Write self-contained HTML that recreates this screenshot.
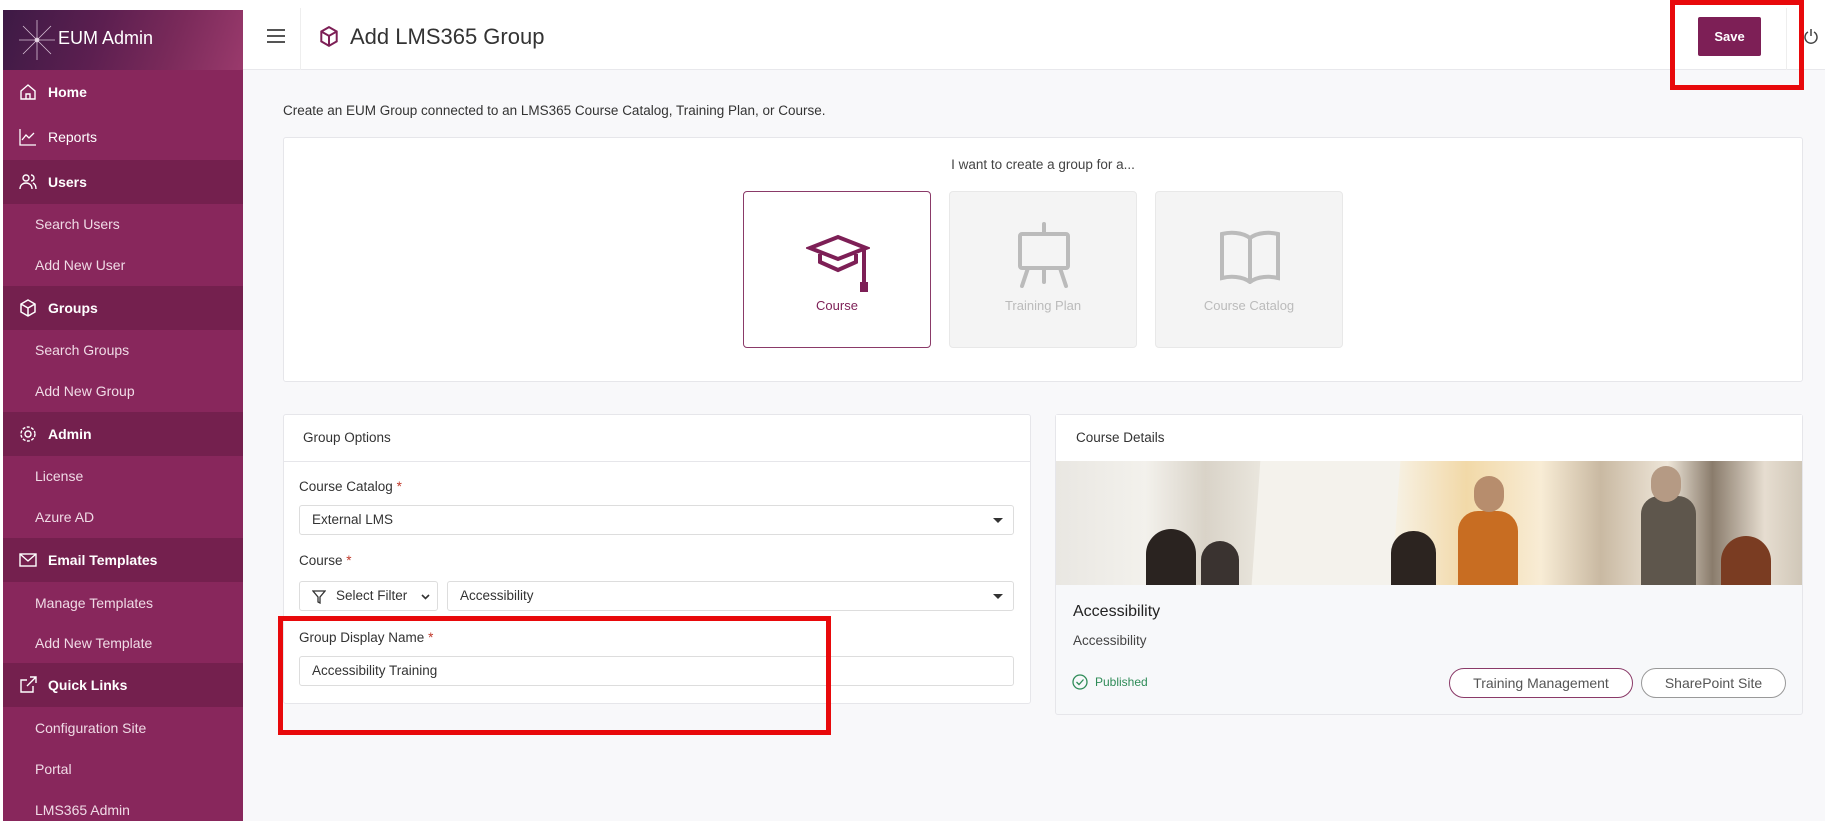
<!DOCTYPE html>
<html><head><meta charset="utf-8"><style>
*{box-sizing:border-box;margin:0;padding:0}
body{width:1825px;height:821px;overflow:hidden;background:#fff;font-family:"Liberation Sans",sans-serif;position:relative;color:#333}
.abs{position:absolute}
#side{left:3px;top:10px;width:240px;height:811px;background:#88275c;overflow:hidden}
#logo{left:0;top:0;width:240px;height:60px;background:linear-gradient(110deg,#3d1a45 0%,#5c1f50 40%,#7a2a5a 70%,#9a3a6c 100%)}
.mi{position:absolute;left:0;width:240px;height:44px;color:#fff;font-size:14px;display:flex;align-items:center}
.mi.top{background:#74204e;font-weight:bold;padding-left:45px}
.mi.plain{font-weight:bold;padding-left:45px}
.mi.sub{padding-left:32px;color:#f0dbe6}
.mi svg{position:absolute;left:16px;top:13px}
#main{left:243px;top:70px;width:1582px;height:751px;background:#f8f8fa}
.card{background:#fff;border:1px solid #e6e6ea;border-radius:3px}
.tile{position:absolute;top:191px;width:188px;height:157px;border-radius:4px;font-size:13px;text-align:center}
.lbl{font-size:13.5px;color:#333}
.req{color:#c0392b}
.sel{position:absolute;height:30px;border:1px solid #ddd;border-radius:3px;background:#fff;font-size:13.5px;padding-left:12px;line-height:28px}
.caret{position:absolute;right:10px;top:12px;width:0;height:0;border-left:5px solid transparent;border-right:5px solid transparent;border-top:5px solid #333}
.pill{position:absolute;top:668px;height:30px;border-radius:15px;font-size:14px;text-align:center;line-height:28px;color:#555;background:#fff}
.red{position:absolute;border:5px solid #e8090b;z-index:10}
</style></head><body>
<div id="main" class="abs"></div>
<div class="abs" style="left:243px;top:0;width:1582px;height:70px;background:#fff;border-bottom:1px solid #e8e8ec"></div>
<div id="side" class="abs">
 <div id="logo" class="abs">
  <svg class="abs" style="left:12px;top:8px" width="44" height="44" viewBox="0 0 44 44" stroke="#d9c3d6" stroke-width="0.8" fill="#e8d8e6"><line x1="22" y1="2" x2="22" y2="42"/><line x1="4" y1="22" x2="40" y2="22"/><line x1="8" y1="8" x2="36" y2="36"/><line x1="36" y1="8" x2="8" y2="36"/><circle cx="22" cy="22" r="2"/></svg>
  <div class="abs" style="left:55px;top:18px;color:#fff;font-size:18px">EUM Admin</div>
 </div>
 <div class="mi plain" style="top:60px"><svg width="18" height="18" viewBox="0 0 18 18" fill="none" stroke="#fff" stroke-width="1.4"><path d="M2 8L9 2l7 6v8H2z M7 16v-5h4v5"/></svg>Home</div>
 <div class="mi plain" style="top:105px;font-weight:normal"><svg width="18" height="18" viewBox="0 0 18 18" fill="none" stroke="#fff" stroke-width="1.3"><path d="M1 1v16h16 M3 12l4-5 3 3 5-5"/></svg>Reports</div>
 <div class="mi top" style="top:150px"><svg width="18" height="18" viewBox="0 0 18 18" fill="none" stroke="#fff" stroke-width="1.4"><circle cx="7" cy="5" r="3"/><path d="M1 16c0-4 3-6 6-6s6 2 6 6 M12 2a3 3 0 010 6 M14 10c2 1 3 3 3 6"/></svg>Users</div>
 <div class="mi sub" style="top:192px">Search Users</div>
 <div class="mi sub" style="top:233px">Add New User</div>
 <div class="mi top" style="top:276px"><svg width="18" height="18" viewBox="0 0 18 18" fill="none" stroke="#fff" stroke-width="1.5"><path d="M9 1l7 4v8l-7 4-7-4V5z M2 5l7 4 7-4 M9 9v8"/></svg>Groups</div>
 <div class="mi sub" style="top:318px">Search Groups</div>
 <div class="mi sub" style="top:359px">Add New Group</div>
 <div class="mi top" style="top:402px"><svg width="18" height="18" viewBox="0 0 18 18" fill="none" stroke="#fff" stroke-width="1.4"><circle cx="9" cy="9" r="3"/><circle cx="9" cy="9" r="7" stroke-dasharray="3 1.5"/></svg>Admin</div>
 <div class="mi sub" style="top:444px">License</div>
 <div class="mi sub" style="top:485px">Azure AD</div>
 <div class="mi top" style="top:528px"><svg width="18" height="18" viewBox="0 0 18 18" fill="none" stroke="#fff" stroke-width="1.4"><rect x="1" y="3" width="16" height="12"/><path d="M1 3l8 7 8-7"/></svg>Email Templates</div>
 <div class="mi sub" style="top:571px">Manage Templates</div>
 <div class="mi sub" style="top:611px">Add New Template</div>
 <div class="mi top" style="top:653px"><svg width="18" height="18" viewBox="0 0 18 18" fill="none" stroke="#fff" stroke-width="1.4"><path d="M14 10v6H2V4h6 M11 1h6v6 M17 1L8 10"/></svg>Quick Links</div>
 <div class="mi sub" style="top:696px">Configuration Site</div>
 <div class="mi sub" style="top:737px">Portal</div>
 <div class="mi sub" style="top:778px">LMS365 Admin</div>
</div>
<div class="abs" style="left:267px;top:29px;width:18px;height:14px;border-top:2.5px solid #555;border-bottom:2.5px solid #555"><div style="margin-top:3.5px;border-top:2.5px solid #555"></div></div>
<div class="abs" style="left:300px;top:8px;width:1px;height:62px;background:#eee"></div>
<svg class="abs" style="left:319px;top:26px" width="20" height="22" viewBox="0 0 18 20" fill="none" stroke="#7d1f56" stroke-width="1.8"><path d="M9 1l7 4v9l-7 4-7-4V5z M2 5l7 4 7-4 M9 9v9"/></svg>
<div class="abs" style="left:350px;top:24px;font-size:22px;color:#333">Add LMS365 Group</div>
<div class="abs" style="left:1698px;top:17px;width:63px;height:39px;background:#7d1f56;color:#fff;font-size:13px;font-weight:bold;text-align:center;line-height:39px;border-radius:2px">Save</div>
<div class="abs" style="left:1786px;top:8px;width:1px;height:62px;background:#eee"></div>
<svg class="abs" style="left:1803px;top:28px" width="16" height="16" viewBox="0 0 16 16" fill="none" stroke="#444" stroke-width="1.5"><path d="M5 4a6 6 0 106 0 M8 1v7"/></svg>
<div class="red" style="left:1670px;top:0;width:134px;height:90px"></div>

<div class="abs" style="left:283px;top:103px;font-size:13.5px;color:#333">Create an EUM Group connected to an LMS365 Course Catalog, Training Plan, or Course.</div>
<div class="abs card" style="left:283px;top:137px;width:1520px;height:245px"></div>
<div class="abs" style="left:283px;top:157px;width:1520px;text-align:center;font-size:13.5px;color:#444">I want to create a group for a...</div>
<div class="tile" style="left:743px;background:#fff;border:1.5px solid #8a3a68">
 <svg class="abs" style="left:62px;top:42px" width="64" height="62" viewBox="0 0 64 62" fill="none" stroke="#7d1f56" stroke-width="4"><path d="M4 14L32 3l28 11-28 11z M14 20v8l18 8 18-8v-8 M14 28l18 8 18-8 M58 15v34"/><rect x="54" y="48" width="8" height="10" fill="#7d1f56" stroke="none"/></svg>
 <div class="abs" style="left:0;right:0;top:106px;color:#7d1f56">Course</div>
</div>
<div class="tile" style="left:949px;background:#f4f4f4;border:1px solid #e8e8e8">
 <svg class="abs" style="left:64px;top:30px" width="60" height="66" viewBox="0 0 60 66" fill="none" stroke="#bbb" stroke-width="4" stroke-linecap="round"><path d="M30 2v10"/><rect x="6" y="12" width="48" height="34" rx="2"/><path d="M14 46l-6 18 M46 46l6 18 M30 46v14"/></svg>
 <div class="abs" style="left:0;right:0;top:106px;color:#bbb">Training Plan</div>
</div>
<div class="tile" style="left:1155px;background:#f4f4f4;border:1px solid #e8e8e8">
 <svg class="abs" style="left:62px;top:36px" width="64" height="56" viewBox="0 0 64 56" fill="none" stroke="#bbb" stroke-width="4"><path d="M32 10C24 4 12 4 4 6v44c8-2 20-2 28 4 8-6 20-6 28-4V6c-8-2-20-2-28 4z M32 10v44"/></svg>
 <div class="abs" style="left:0;right:0;top:106px;color:#bbb">Course Catalog</div>
</div>

<div class="abs card" style="left:283px;top:414px;width:748px;height:290px"></div>
<div class="abs" style="left:284px;top:461px;width:746px;height:1px;background:#e6e6ea"></div>
<div class="abs lbl" style="left:303px;top:430px">Group Options</div>
<div class="abs lbl" style="left:299px;top:479px">Course Catalog <span class="req">*</span></div>
<div class="sel" style="left:299px;top:505px;width:715px">External LMS<div class="caret"></div></div>
<div class="abs lbl" style="left:299px;top:553px">Course <span class="req">*</span></div>
<div class="sel" style="left:299px;top:581px;width:139px;padding-left:36px">Select Filter
 <svg class="abs" style="left:12px;top:8px" width="14" height="14" viewBox="0 0 14 14" fill="none" stroke="#333" stroke-width="1.3"><path d="M1 1h12L8 7v6l-2-1V7z"/></svg>
 <svg class="abs" style="left:121px;top:12px" width="9" height="6" viewBox="0 0 9 6" fill="none" stroke="#333" stroke-width="1.6"><path d="M1 1l3.5 3.5L8 1"/></svg></div>
<div class="sel" style="left:447px;top:581px;width:567px">Accessibility<div class="caret"></div></div>
<div class="abs lbl" style="left:299px;top:630px">Group Display Name <span class="req">*</span></div>
<div class="sel" style="left:299px;top:656px;width:715px">Accessibility Training</div>
<div class="red" style="left:278px;top:616px;width:553px;height:119px"></div>

<div class="abs card" style="left:1055px;top:414px;width:748px;height:301px;background:#f7f8fa"></div>
<div class="abs" style="left:1056px;top:415px;width:746px;height:46px;background:#fff"></div>
<div class="abs lbl" style="left:1076px;top:430px">Course Details</div>
<div class="abs" style="left:1056px;top:461px;width:746px;height:124px;background:linear-gradient(90deg,#e9e7e2 0%,#f3f1ec 12%,#d9d3c8 20%,#efece4 30%,#f7f2e6 45%,#f2d9a8 55%,#f8ecd5 65%,#c9b9a2 73%,#eee6d9 82%,#8a7c6c 88%,#e6ddd0 95%,#d0c7b8 100%);overflow:hidden">
 <div class="abs" style="left:90px;top:68px;width:50px;height:60px;border-radius:25px 25px 0 0;background:#2a2320"></div>
 <div class="abs" style="left:145px;top:80px;width:38px;height:50px;border-radius:19px 19px 0 0;background:#3a3330"></div>
 <div class="abs" style="left:200px;top:0;width:140px;height:124px;background:#f4f2ec;transform:skewX(-4deg)"></div>
 <div class="abs" style="left:335px;top:70px;width:45px;height:60px;border-radius:22px 22px 0 0;background:#2c2420"></div>
 <div class="abs" style="left:402px;top:50px;width:60px;height:80px;background:#c86d22;border-radius:20px 20px 0 0"></div>
 <div class="abs" style="left:418px;top:15px;width:30px;height:36px;background:#b78d6d;border-radius:15px"></div>
 <div class="abs" style="left:585px;top:35px;width:55px;height:95px;background:#5e564c;border-radius:18px 18px 0 0"></div>
 <div class="abs" style="left:595px;top:5px;width:30px;height:36px;background:#b59a84;border-radius:15px"></div>
 <div class="abs" style="left:665px;top:75px;width:50px;height:55px;background:#7a3c22;border-radius:25px 25px 0 0"></div>
</div>
<div class="abs" style="left:1073px;top:603px;font-size:16px;color:#222">Accessibility</div>
<div class="abs" style="left:1073px;top:633px;font-size:13.5px;color:#444">Accessibility</div>
<svg class="abs" style="left:1072px;top:674px" width="16" height="16" viewBox="0 0 16 16" fill="none" stroke="#2e8b57" stroke-width="1.3"><circle cx="8" cy="8" r="7"/><path d="M4.5 8l2.5 2.5 4.5-5"/></svg>
<div class="abs" style="left:1095px;top:675px;font-size:12px;color:#2e8b57">Published</div>
<div class="pill" style="left:1449px;width:184px;border:1.3px solid #8a3a68">Training Management</div>
<div class="pill" style="left:1641px;width:145px;border:1.3px solid #999">SharePoint Site</div>
</body></html>
